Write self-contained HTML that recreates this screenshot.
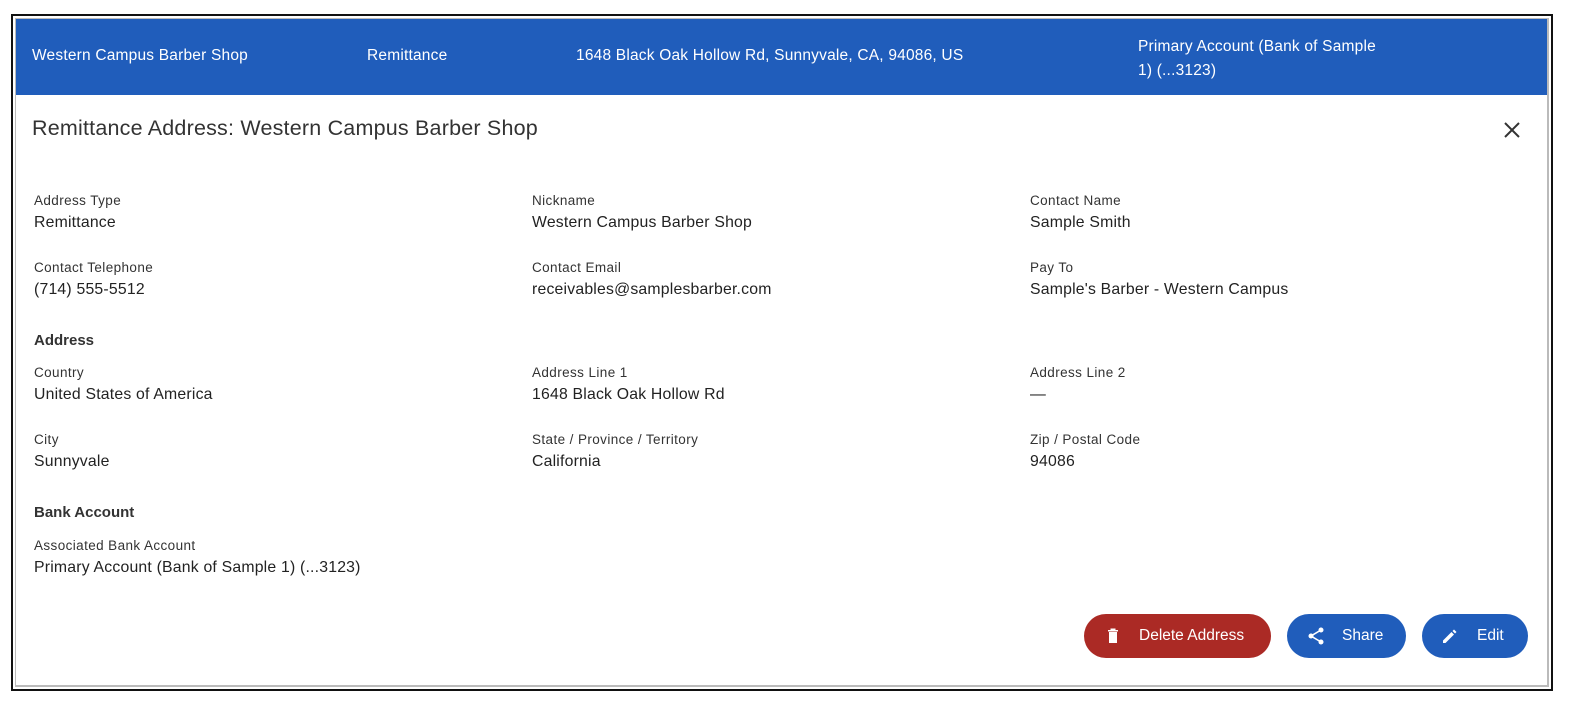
<!DOCTYPE html>
<html><head><style>
*{margin:0;padding:0;box-sizing:border-box}
body{width:1592px;height:715px;background:#fff;font-family:"Liberation Sans",sans-serif;position:relative;overflow:hidden}
.outer{position:absolute;left:11px;top:14px;width:1542px;height:677px;border:2px solid #111}
.card{position:absolute;left:15px;top:18px;width:1534px;height:669px;border:1px solid #bbb;border-right:2px solid #bbb;border-bottom:2px solid #bbb}
.hdr{position:absolute;left:16px;top:19px;width:1531px;height:76px;background:#205dbb;color:#fff;font-size:15.5px;letter-spacing:.2px}
.hdr span{position:absolute}
.t{position:absolute;font-size:21.5px;color:#333;left:32px;top:116px;letter-spacing:.2px}
.l{position:absolute;font-size:13.5px;color:#333;letter-spacing:.4px}
.v{position:absolute;font-size:15.8px;color:#222;letter-spacing:.2px}
.s{position:absolute;font-size:15px;font-weight:bold;color:#333}
.btn{position:absolute;top:614px;height:44px;border-radius:22px;color:#fff;font-size:15.5px;display:flex;align-items:center}
.btn svg{position:absolute}
</style></head><body>
<div class="outer"></div><div class="card"></div>
<div class="hdr">
<span style="left:16px;top:28px">Western Campus Barber Shop</span>
<span style="left:351px;top:28px">Remittance</span>
<span style="left:560px;top:28px">1648 Black Oak Hollow Rd, Sunnyvale, CA, 94086, US</span>
<span style="left:1122px;top:16px;line-height:24px">Primary Account (Bank of Sample<br>1) (...3123)</span>
</div>
<div class="t">Remittance Address: Western Campus Barber Shop</div>
<svg style="position:absolute;left:1503px;top:121px" width="18" height="18" viewBox="0 0 18 18"><path d="M2 2L16 16M16 2L2 16" stroke="#333" stroke-width="2"/></svg>

<div class="l" style="left:34px;top:193px">Address Type</div><div class="v" style="left:34px;top:214px">Remittance</div>
<div class="l" style="left:532px;top:193px">Nickname</div><div class="v" style="left:532px;top:214px">Western Campus Barber Shop</div>
<div class="l" style="left:1030px;top:193px">Contact Name</div><div class="v" style="left:1030px;top:214px">Sample Smith</div>
<div class="l" style="left:34px;top:260px">Contact Telephone</div><div class="v" style="left:34px;top:281px">(714) 555-5512</div>
<div class="l" style="left:532px;top:260px">Contact Email</div><div class="v" style="left:532px;top:281px">receivables@samplesbarber.com</div>
<div class="l" style="left:1030px;top:260px">Pay To</div><div class="v" style="left:1030px;top:281px">Sample's Barber - Western Campus</div>
<div class="s" style="left:34px;top:332px">Address</div>
<div class="l" style="left:34px;top:365px">Country</div><div class="v" style="left:34px;top:386px">United States of America</div>
<div class="l" style="left:532px;top:365px">Address Line 1</div><div class="v" style="left:532px;top:386px">1648 Black Oak Hollow Rd</div>
<div class="l" style="left:1030px;top:365px">Address Line 2</div><div class="v" style="left:1030px;top:386px">—</div>
<div class="l" style="left:34px;top:432px">City</div><div class="v" style="left:34px;top:453px">Sunnyvale</div>
<div class="l" style="left:532px;top:432px">State / Province / Territory</div><div class="v" style="left:532px;top:453px">California</div>
<div class="l" style="left:1030px;top:432px">Zip / Postal Code</div><div class="v" style="left:1030px;top:453px">94086</div>
<div class="s" style="left:34px;top:504px">Bank Account</div>
<div class="l" style="left:34px;top:538px">Associated Bank Account</div><div class="v" style="left:34px;top:559px">Primary Account (Bank of Sample 1) (...3123)</div>

<div class="btn" style="left:1084px;width:187px;background:#ab2a25">
<svg style="left:22px;top:14px" width="14" height="16" viewBox="0 0 14 16"><path d="M2 2h10v1.5H2z M4.5 0.5h5V2h-5z M3 4h8v11H3z" fill="#fff"/></svg>
<span style="position:absolute;left:55px">Delete Address</span></div>
<div class="btn" style="left:1287px;width:119px;background:#205dbb">
<svg style="left:20px;top:13px" width="18" height="18" viewBox="0 0 18 18"><circle cx="14" cy="3" r="2.5" fill="#fff"/><circle cx="4" cy="9" r="2.5" fill="#fff"/><circle cx="14" cy="15" r="2.5" fill="#fff"/><path d="M14 3L4 9L14 15" stroke="#fff" stroke-width="1.6" fill="none"/></svg>
<span style="position:absolute;left:55px">Share</span></div>
<div class="btn" style="left:1422px;width:106px;background:#205dbb">
<svg style="left:20px;top:14px" width="16" height="16" viewBox="0 0 16 16"><path d="M1 12.5V15h2.5L12 6.5 9.5 4z M13 5.5l1.5-1.5-2.5-2.5L10.5 3z" fill="#fff"/></svg>
<span style="position:absolute;left:55px">Edit</span></div>
</body></html>
